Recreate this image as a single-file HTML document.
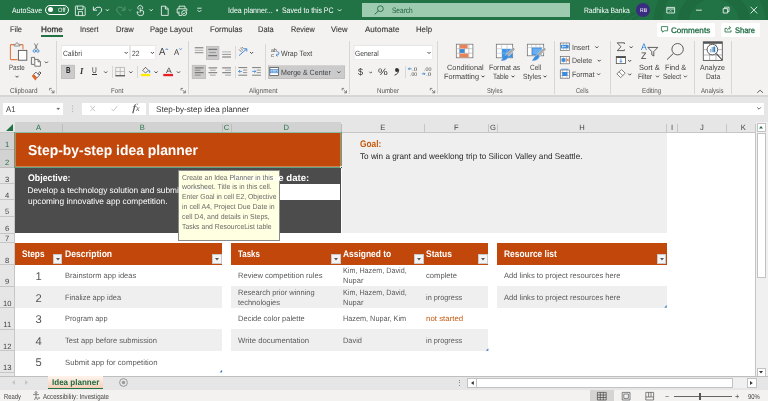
<!DOCTYPE html><html><head><meta charset="utf-8"><style>*{box-sizing:border-box;margin:0;padding:0}
html,body{width:768px;height:401px;overflow:hidden;background:#f3f2f1;font-family:"Liberation Sans",sans-serif}
#w{position:absolute;left:0;top:0;width:768px;height:401px;will-change:transform}
.a{position:absolute}
.t{position:absolute;white-space:nowrap;line-height:1;transform-origin:0 0;text-rendering:geometricPrecision}
svg{position:absolute;overflow:visible}
</style></head><body><div id="w"><div class="a" style="left:0px;top:0px;width:768px;height:20px;background:#217346;"></div><div class="a" style="left:560px;top:0;width:208px;height:20px;overflow:hidden"><svg style="left:0;top:0" width="208" height="20" viewBox="560 0 208 20"><circle cx="714" cy="24" r="56" fill="none" stroke="#1e6b40" stroke-width="9"/><circle cx="714" cy="24" r="31" fill="none" stroke="#1e6b40" stroke-width="11"/><path d="M600 20L612 12M608 20L620 12M616 20L628 12M624 20L636 12M632 20L644 12" stroke="#1e6b40" stroke-width="2"/></svg></div><div class="a" style="left:45.3px;top:4.6px;width:23.7px;height:10.2px;border:0.9px solid #fff;border-radius:5.1px"></div><div class="a" style="left:48px;top:7.4px;width:4.6px;height:4.6px;border-radius:3px;background:#fff"></div><div class="a" style="left:362.3px;top:3px;width:207.3px;height:14px;background:#9ccbb0;"></div><div class="a" style="left:636px;top:3px;width:14px;height:14px;border-radius:7px;background:#3a2d80"></div><div class="a" style="left:40.75px;top:35px;width:21.75px;height:1.8px;background:#217346;"></div><div class="a" style="left:656.75px;top:23px;width:58px;height:13.5px;background:#fff;border-radius:1.5px"></div><div class="a" style="left:721px;top:23px;width:39.25px;height:13.5px;background:#fff;border-radius:1.5px"></div><div class="a" style="left:56.25px;top:41px;width:0.8px;height:52.5px;background:#d8d6d4;"></div><div class="a" style="left:187.5px;top:41px;width:0.8px;height:52.5px;background:#d8d6d4;"></div><div class="a" style="left:349px;top:41px;width:0.8px;height:52.5px;background:#d8d6d4;"></div><div class="a" style="left:437.25px;top:41px;width:0.8px;height:52.5px;background:#d8d6d4;"></div><div class="a" style="left:553.5px;top:41px;width:0.8px;height:52.5px;background:#d8d6d4;"></div><div class="a" style="left:609.75px;top:41px;width:0.8px;height:52.5px;background:#d8d6d4;"></div><div class="a" style="left:694px;top:41px;width:0.8px;height:52.5px;background:#d8d6d4;"></div><div class="a" style="left:730.5px;top:41px;width:0.8px;height:52.5px;background:#d8d6d4;"></div><div class="a" style="left:111.75px;top:66px;width:0.8px;height:12px;background:#dad8d6;"></div><div class="a" style="left:137.25px;top:66px;width:0.8px;height:12px;background:#dad8d6;"></div><div class="a" style="left:234.5px;top:46px;width:0.8px;height:13px;background:#dad8d6;"></div><div class="a" style="left:234.5px;top:66px;width:0.8px;height:12px;background:#dad8d6;"></div><div class="a" style="left:265.25px;top:44px;width:0.8px;height:36px;background:#dad8d6;"></div><div class="a" style="left:404.75px;top:66px;width:0.8px;height:12px;background:#dad8d6;"></div><div class="a" style="left:61.25px;top:45.5px;width:68px;height:14px;background:#fff;"></div><div class="a" style="left:130.5px;top:45.5px;width:25px;height:14px;background:#fff;"></div><div class="a" style="left:61.25px;top:65px;width:13.25px;height:13.75px;background:#cbcbcb;"></div><div class="a" style="left:92.2px;top:74.4px;width:5.2px;height:0.8px;background:#333;"></div><div class="a" style="left:206.25px;top:46.25px;width:12.75px;height:13.25px;background:#cbcbcb;"></div><div class="a" style="left:192px;top:65px;width:13.75px;height:13.75px;background:#cbcbcb;"></div><div class="a" style="left:268.25px;top:65.5px;width:76.25px;height:13.25px;background:#cbcbcb;"></div><div class="a" style="left:354px;top:45.5px;width:78.75px;height:14px;background:#fff;"></div><div class="a" style="left:0px;top:95px;width:768px;height:1.6px;background:#d8d6d4;"></div><div class="a" style="left:0px;top:96.6px;width:768px;height:25.4px;background:#e6e6e6;"></div><div class="a" style="left:3px;top:102.5px;width:60px;height:12.5px;background:#fff;"></div><div class="a" style="left:81.75px;top:102.5px;width:64.5px;height:12.5px;background:#fff;"></div><div class="a" style="left:149.25px;top:102.5px;width:615px;height:12.5px;background:#fff;"></div><div class="a" style="left:0px;top:122px;width:755.5px;height:254.5px;background:#fff;"></div><div class="a" style="left:0px;top:122px;width:768px;height:10.5px;background:#e6e6e6;"></div><div class="a" style="left:14.5px;top:122px;width:326.8px;height:10.5px;background:#d2d2d2;"></div><div class="a" style="left:0px;top:132px;width:755.5px;height:0.8px;background:#c6c6c6;"></div><div class="a" style="left:14.5px;top:131.6px;width:327px;height:0.9px;background:#5fa07f;"></div><div class="a" style="left:62.1px;top:123.5px;width:0.8px;height:8.5px;background:#bdbdbd;"></div><div class="a" style="left:221.6px;top:123.5px;width:0.8px;height:8.5px;background:#bdbdbd;"></div><div class="a" style="left:230.6px;top:123.5px;width:0.8px;height:8.5px;background:#bdbdbd;"></div><div class="a" style="left:340.90000000000003px;top:123.5px;width:0.8px;height:8.5px;background:#bdbdbd;"></div><div class="a" style="left:424.1px;top:123.5px;width:0.8px;height:8.5px;background:#c6c6c6;"></div><div class="a" style="left:487.85px;top:123.5px;width:0.8px;height:8.5px;background:#c6c6c6;"></div><div class="a" style="left:497.1px;top:123.5px;width:0.8px;height:8.5px;background:#c6c6c6;"></div><div class="a" style="left:666.3000000000001px;top:123.5px;width:0.8px;height:8.5px;background:#c6c6c6;"></div><div class="a" style="left:677.1px;top:123.5px;width:0.8px;height:8.5px;background:#c6c6c6;"></div><div class="a" style="left:725.9px;top:123.5px;width:0.8px;height:8.5px;background:#c6c6c6;"></div><div class="a" style="left:754.9px;top:123.5px;width:0.8px;height:8.5px;background:#c6c6c6;"></div><div class="a" style="left:0px;top:132.8px;width:14.5px;height:243.7px;background:#e6e6e6;"></div><div class="a" style="left:0px;top:132.8px;width:14.5px;height:34.5px;background:#d2d2d2;"></div><div class="a" style="left:13.9px;top:132.8px;width:0.9px;height:34.5px;background:#5fa07f;"></div><div class="a" style="left:0px;top:148.6px;width:14.5px;height:0.8px;background:#bdbdbd;"></div><div class="a" style="left:0px;top:166.9px;width:14.5px;height:0.8px;background:#bdbdbd;"></div><div class="a" style="left:0px;top:183.1px;width:14.5px;height:0.8px;background:#c6c6c6;"></div><div class="a" style="left:0px;top:199.4px;width:14.5px;height:0.8px;background:#c6c6c6;"></div><div class="a" style="left:0px;top:215.6px;width:14.5px;height:0.8px;background:#c6c6c6;"></div><div class="a" style="left:0px;top:232.6px;width:14.5px;height:0.8px;background:#c6c6c6;"></div><div class="a" style="left:0px;top:242.29999999999998px;width:14.5px;height:0.8px;background:#c6c6c6;"></div><div class="a" style="left:0px;top:264.1px;width:14.5px;height:0.8px;background:#c6c6c6;"></div><div class="a" style="left:0px;top:285.6px;width:14.5px;height:0.8px;background:#c6c6c6;"></div><div class="a" style="left:0px;top:307.1px;width:14.5px;height:0.8px;background:#c6c6c6;"></div><div class="a" style="left:0px;top:328.6px;width:14.5px;height:0.8px;background:#c6c6c6;"></div><div class="a" style="left:0px;top:350.3px;width:14.5px;height:0.8px;background:#c6c6c6;"></div><div class="a" style="left:0px;top:371.90000000000003px;width:14.5px;height:0.8px;background:#c6c6c6;"></div><div class="a" style="left:14.1px;top:132.8px;width:0.8px;height:243.7px;background:#c6c6c6;"></div><svg style="left:6.2px;top:123.8px" width="7" height="7" viewBox="0 0 7 7"><path d="M7 0V7H0Z" fill="#217346"/></svg><div class="a" style="left:14.5px;top:132.3px;width:327px;height:35.2px;background:#c1470a;"></div><div class="a" style="left:14.2px;top:131.5px;width:327.6px;height:36.4px;border:1px solid #5fa07f;"></div><div class="a" style="left:15.1px;top:132.4px;width:325.8px;height:34.6px;border:0.7px solid rgba(255,255,255,0.3)"></div><div class="a" style="left:339.6px;top:165.6px;width:3.2px;height:3.2px;background:#1a6b3a;border:0.5px solid #e8e8e8"></div><div class="a" style="left:14.9px;top:168px;width:326.4px;height:65.2px;background:#4c4c4c;"></div><div class="a" style="left:232px;top:183.8px;width:108.2px;height:16.2px;background:#fff;"></div><div class="a" style="left:341.8px;top:132.8px;width:325px;height:100.4px;background:#efefef;"></div><div class="a" style="left:14.9px;top:243px;width:207.1px;height:21.5px;background:#c1470a;"></div><div class="a" style="left:14.9px;top:286px;width:207.1px;height:21.5px;background:#efefef;"></div><div class="a" style="left:14.9px;top:329px;width:207.1px;height:21.69999999999999px;background:#efefef;"></div><div class="a" style="left:231px;top:243px;width:257.25px;height:21.5px;background:#c1470a;"></div><div class="a" style="left:231px;top:286px;width:257.25px;height:21.5px;background:#efefef;"></div><div class="a" style="left:231px;top:329px;width:257.25px;height:21.69999999999999px;background:#efefef;"></div><div class="a" style="left:497px;top:243px;width:169.70000000000005px;height:21.5px;background:#c1470a;"></div><div class="a" style="left:497px;top:286px;width:169.70000000000005px;height:21.5px;background:#efefef;"></div><div class="a" style="left:52.9px;top:254px;width:9.6px;height:9.8px;background:#f4f4f4;border:0.8px solid #c9c9c9"></div><svg style="left:55.8px;top:257.9px" width="4" height="2.4" viewBox="0 0 4 2.4"><path d="M0 0H4L2 2.4Z" fill="#555"/></svg><div class="a" style="left:212.2px;top:254px;width:9.6px;height:9.8px;background:#f4f4f4;border:0.8px solid #c9c9c9"></div><svg style="left:215.1px;top:257.9px" width="4" height="2.4" viewBox="0 0 4 2.4"><path d="M0 0H4L2 2.4Z" fill="#555"/></svg><div class="a" style="left:331px;top:254px;width:9.6px;height:9.8px;background:#f4f4f4;border:0.8px solid #c9c9c9"></div><svg style="left:333.9px;top:257.9px" width="4" height="2.4" viewBox="0 0 4 2.4"><path d="M0 0H4L2 2.4Z" fill="#555"/></svg><div class="a" style="left:414.4px;top:254px;width:9.6px;height:9.8px;background:#f4f4f4;border:0.8px solid #c9c9c9"></div><svg style="left:417.29999999999995px;top:257.9px" width="4" height="2.4" viewBox="0 0 4 2.4"><path d="M0 0H4L2 2.4Z" fill="#555"/></svg><div class="a" style="left:478.4px;top:254px;width:9.6px;height:9.8px;background:#f4f4f4;border:0.8px solid #c9c9c9"></div><svg style="left:481.29999999999995px;top:257.9px" width="4" height="2.4" viewBox="0 0 4 2.4"><path d="M0 0H4L2 2.4Z" fill="#555"/></svg><div class="a" style="left:656.6px;top:254px;width:9.6px;height:9.8px;background:#f4f4f4;border:0.8px solid #c9c9c9"></div><svg style="left:659.5px;top:257.9px" width="4" height="2.4" viewBox="0 0 4 2.4"><path d="M0 0H4L2 2.4Z" fill="#555"/></svg><div class="a" style="left:178px;top:169.5px;width:101.6px;height:71px;background:#ffffe1;border:0.8px solid #8a8a8a"></div><div class="a" style="left:755.5px;top:122px;width:12.5px;height:254.5px;background:#f0f0f0;"></div><div class="a" style="left:755.2px;top:132.8px;width:0.8px;height:243.7px;background:#c4c4c4;"></div><div class="a" style="left:756.6px;top:122.5px;width:9.4px;height:9.6px;background:#fff;border:0.8px solid #c2c2c2"></div><svg style="left:759.3px;top:125.8px" width="4" height="2.6" viewBox="0 0 4 2.6"><path d="M0 2.6H4L2 0Z" fill="#217346"/></svg><div class="a" style="left:756.8px;top:133px;width:9px;height:145px;background:#fff;border:0.8px solid #c2c2c2"></div><div class="a" style="left:756.6px;top:367.5px;width:9.6px;height:9px;background:#fff;border:0.8px solid #c2c2c2"></div><svg style="left:759.3px;top:370.8px" width="4" height="2.6" viewBox="0 0 4 2.6"><path d="M0 0H4L2 2.6Z" fill="#333"/></svg><div class="a" style="left:0px;top:376.5px;width:768px;height:13.3px;background:#e6e6e6;"></div><div class="a" style="left:0px;top:376.2px;width:768px;height:0.9px;background:#bfbfbf;"></div><div class="a" style="left:47.5px;top:376.2px;width:55.8px;height:12.9px;background:linear-gradient(#fdf1e9 10%,#f7d9c6 70%,#f3c9b0)"></div><div class="a" style="left:47.5px;top:387.7px;width:55.8px;height:1.4px;background:#217346;"></div><svg style="left:11.5px;top:380px" width="3" height="5" viewBox="0 0 3 5"><path d="M3 0V5L0 2.5Z" fill="#c4c4c4"/></svg><svg style="left:25px;top:380px" width="3" height="5" viewBox="0 0 3 5"><path d="M0 0V5L3 2.5Z" fill="#c4c4c4"/></svg><svg style="left:119.2px;top:378.2px" width="9" height="9" viewBox="0 0 9 9"><circle cx="4.5" cy="4.5" r="3.9" fill="none" stroke="#777" stroke-width="0.7"/><circle cx="4.5" cy="4.5" r="1.7" fill="#9a9a9a"/></svg><div class="a" style="left:459.3px;top:379.5px;width:0.9px;height:0.9px;background:#888;"></div><div class="a" style="left:459.3px;top:382.3px;width:0.9px;height:0.9px;background:#888;"></div><div class="a" style="left:459.3px;top:385.1px;width:0.9px;height:0.9px;background:#888;"></div><div class="a" style="left:467.2px;top:378.4px;width:10px;height:9.2px;background:#fff;border:0.8px solid #c2c2c2"></div><svg style="left:470.6px;top:381px" width="2.8" height="4" viewBox="0 0 2.8 4"><path d="M2.8 0V4L0 2Z" fill="#333"/></svg><div class="a" style="left:477.2px;top:378.4px;width:255.8px;height:9.2px;background:#fff;border:0.8px solid #c2c2c2;border-left:none"></div><div class="a" style="left:733px;top:378.4px;width:13.5px;height:9.2px;background:#f0f0f0;"></div><div class="a" style="left:746.5px;top:378.4px;width:10px;height:9.2px;background:#fff;border:0.8px solid #c2c2c2"></div><svg style="left:750.2px;top:381px" width="2.8" height="4" viewBox="0 0 2.8 4"><path d="M0 0V4L2.8 2Z" fill="#333"/></svg><div class="a" style="left:0px;top:389.8px;width:768px;height:11.2px;background:#f3f2f1;"></div><div class="a" style="left:590.25px;top:390.2px;width:23.25px;height:10.8px;background:#d6d4d2;"></div><div class="a" style="left:673.5px;top:396.2px;width:58.8px;height:0.8px;background:#666;"></div><div class="a" style="left:699.4px;top:393.4px;width:1.9px;height:6.2px;background:#555;"></div><svg style="left:0;top:0" width="768" height="401" viewBox="0 0 768 401" fill="none" stroke-linecap="butt"><path d="M75.4 6.6Q75.4 6 76 6H83.4L85.2 7.8V15Q85.2 15.6 84.6 15.6H76Q75.4 15.6 75.4 15Z" stroke="#fff" stroke-width="0.8" fill="none" /><path d="M77.4 6.2V9.4H83V6.2 M78.4 15.4V11.6H82.4V15.4" stroke="#fff" stroke-width="0.8" fill="none" /><path d="M93.4 6.6V10.2H97 M93.6 10Q96.5 6.2 100 7.2Q102.6 8.4 101.4 11.2L97.2 15.6" stroke="#fff" stroke-width="0.85" fill="none" /><path d="M106.0 9.4L107.4 10.799999999999999L108.80000000000001 9.4" stroke="#fff" stroke-width="1.0" fill="none" /><path d="M125 6.6V10.2H121.4 M124.8 10Q121.9 6.2 118.4 7.2Q115.8 8.4 117 11.2L121.2 15.6" stroke="#5f9c7e" stroke-width="0.85" fill="none" /><path d="M128.6 9.4L130 10.799999999999999L131.4 9.4" stroke="#5f9c7e" stroke-width="1.0" fill="none" /><path d="M138.4 9.4A2.4 2.4 0 1 1 142 9.4 M140.2 7.6V12.6 M140.2 10.6H142.2Q143.6 10.6 143.6 12V13Q143.6 15.6 141 15.6H140.2Q138 15.6 137.4 13.4L137 11.8L138.6 12.4" stroke="#fff" stroke-width="0.8" fill="none" /><path d="M149.79999999999998 9.4L151.2 10.799999999999999L152.6 9.4" stroke="#fff" stroke-width="1.0" fill="none" /><path d="M161.4 6.2H165.6L168.2 8.8V15.4H161.4Z M165.4 6.2V9H168.2" stroke="#fff" stroke-width="0.8" fill="none" /><path d="M179 8.6V6.2H185V8.6 M179 13H177.2V8.8H186.8V11 M179 11.4V15.4H182" stroke="#fff" stroke-width="0.8" fill="none" /><circle cx="184.2" cy="13" r="2.5" fill="none" stroke="#fff" stroke-width="0.8"/><path d="M183 13.1L184 14L185.5 12.2" stroke="#fff" stroke-width="0.7" fill="none" /><path d="M197.2 8.2H201.6" stroke="#fff" stroke-width="0.8" fill="none" /><path d="M197.4 10L199.4 12L201.4 10" stroke="#fff" stroke-width="0.8" fill="none" /><path d="M337.90000000000003 9.35L339.6 11.049999999999999L341.3 9.35" stroke="#fff" stroke-width="0.9" fill="none" /><circle cx="380.4" cy="8.7" r="2.9" fill="none" stroke="#1d5c3a" stroke-width="0.8"/><path d="M378.4 10.9L374.7 14.4" stroke="#1d5c3a" stroke-width="0.9" fill="none" /><path d="M666.8 7.4H674.6V13H666.8Z M666.8 9H674.6" stroke="#fff" stroke-width="0.8" fill="none" /><path d="M669.6 11.6L670.7 10.4L671.8 11.6" stroke="#fff" stroke-width="0.7" fill="none" /><path d="M696 10.2H701.8" stroke="#fff" stroke-width="0.8" fill="none" /><path d="M723.2 8.6H727.6V13H723.2Z M724.6 8.4V7.2H729V11.6H727.8" stroke="#fff" stroke-width="0.8" fill="none" /><path d="M750.6 6.8L757.2 13.4M757.2 6.8L750.6 13.4" stroke="#fff" stroke-width="0.85" fill="none" /><path d="M661.4 26.6H667.6V30.8H664.2L662.6 32.2V30.8H661.4Z" stroke="#1e6b41" stroke-width="0.8" fill="none" /><path d="M727 28.4H725V32H731V30 M727.4 30.4Q727.8 27.8 730 27.8 M729 26.2L730.8 27.8L729 29.4" stroke="#1e6b41" stroke-width="0.8" fill="none" /><path d="M14.4 44.6H11.2Q10.4 44.6 10.4 45.4V58.8Q10.4 59.6 11.2 59.6H17.6 M19.6 44.6H22.2Q23 44.6 23 45.4V49.6" stroke="#e07a45" stroke-width="1.1" fill="none" /><path d="M14.2 46V44.4H15.6Q15.8 42.8 17 42.8Q18.2 42.8 18.4 44.4H19.8V46Z" stroke="#777" stroke-width="0.8" fill="#f3f2f1" /><rect x="18.4" y="50.4" width="8.4" height="9.8" fill="#fff" stroke="#555" stroke-width="0.9" rx="0"/><path d="M15.5 75.85L17 77.35L18.5 75.85" stroke="#444" stroke-width="1.0" fill="none" /><path d="M34.4 43.4L37.4 49.4 M37.8 43.4L34.8 49.4" stroke="#666" stroke-width="0.8" fill="none" /><circle cx="34.4" cy="51" r="1.3" fill="none" stroke="#2f7fd0" stroke-width="0.8"/><circle cx="37.8" cy="51" r="1.3" fill="none" stroke="#2f7fd0" stroke-width="0.8"/><path d="M34.6 59.6V57.4H31.4V64.4H34.2" stroke="#555" stroke-width="0.8" fill="none" /><path d="M34.8 59.4H38.2L40.4 61.6V66.2H34.8Z M38 59.6V61.8H40.2" stroke="#555" stroke-width="0.8" fill="#fff" /><path d="M44.9 61.55L46.4 63.05L47.9 61.55" stroke="#444" stroke-width="1.0" fill="none" /><path d="M37.4 74.2L39.8 71.8L41 73L38.6 75.4" stroke="#444" stroke-width="0.9" fill="none" /><path d="M33.6 74.4L36 72.2L39.2 75.4L37 77.8Z" stroke="#444" stroke-width="0.8" fill="#fff" /><path d="M32 76L33.6 74.6L36.8 77.8L35.4 80.2Z" stroke="#e0662a" stroke-width="0.6" fill="#e0662a" /><path d="M49.6 90.4V88.4H51.6 M51.2 90.0L53.800000000000004 92.60000000000001 M54.0 90.4V92.80000000000001H51.6" stroke="#555" stroke-width="0.7" fill="none" /><rect x="61.25" y="45.6" width="68" height="13.8" fill="none" stroke="#e1dfdd" stroke-width="0.6" rx="0"/><rect x="130.6" y="45.6" width="24.9" height="13.8" fill="none" stroke="#e1dfdd" stroke-width="0.6" rx="0"/><path d="M124.7 52.05L126.2 53.55L127.7 52.05" stroke="#444" stroke-width="1.0" fill="none" /><path d="M150.9 52.05L152.4 53.55L153.9 52.05" stroke="#444" stroke-width="1.0" fill="none" /><rect x="61.4" y="65.1" width="13.2" height="13.5" fill="none" stroke="#b8b6b4" stroke-width="0.5" rx="0"/><path d="M104.2 71.45L105.7 72.95L107.2 71.45" stroke="#444" stroke-width="1.0" fill="none" /><rect x="115.8" y="67.3" width="8.8" height="8.4" fill="none" stroke="#aaa" stroke-width="0.7" rx="0"/><path d="M120.2 67.3V75.7 M115.8 71.5H124.6" stroke="#aaa" stroke-width="0.7" fill="none" /><path d="M115.4 75.8H125" stroke="#444" stroke-width="1.1" fill="none" /><path d="M129.3 71.45L130.8 72.95L132.3 71.45" stroke="#444" stroke-width="1.0" fill="none" /><path d="M145.6 67.4L148.6 70.4L145.4 73L142.6 70.2Z" stroke="#555" stroke-width="0.8" fill="none" /><path d="M144.6 68.4L145.6 67.4" stroke="#555" stroke-width="0.8" fill="none" /><path d="M149.2 70.2Q150.4 72 149.6 72.8Q148.6 72.6 149.2 70.2Z" stroke="#2f7fd0" stroke-width="0.6" fill="#2f7fd0" /><rect x="140.9" y="73.9" width="9.3" height="2.3" fill="#ffeb00" stroke="none" stroke-width="0.8" rx="0"/><path d="M154.6 71.45L156.1 72.95L157.6 71.45" stroke="#444" stroke-width="1.0" fill="none" /><rect x="163.3" y="73.9" width="9.7" height="2.3" fill="#ea1c24" stroke="none" stroke-width="0.8" rx="0"/><path d="M177.0 71.45L178.5 72.95L180.0 71.45" stroke="#444" stroke-width="1.0" fill="none" /><path d="M181 90.4V88.4H183 M182.6 90.0L185.2 92.60000000000001 M185.4 90.4V92.80000000000001H183" stroke="#555" stroke-width="0.7" fill="none" /><path d="M165.6 50L166.8 48.6L168 50" stroke="#2f7fd0" stroke-width="0.8" fill="none" /><path d="M179.4 48.4L180.6 49.8L181.8 48.4" stroke="#2f7fd0" stroke-width="0.8" fill="none" /><path d="M194.8 47.8H203.4" stroke="#444" stroke-width="0.75" fill="none" /><path d="M194.8 50.3H203.4" stroke="#999" stroke-width="0.75" fill="none" /><path d="M194.8 52.7H203.4" stroke="#666" stroke-width="0.75" fill="none" /><rect x="206.3" y="46.3" width="12.7" height="13.3" fill="none" stroke="#b8b6b4" stroke-width="0.5" rx="0"/><path d="M208.3 49.3H217.2" stroke="#444" stroke-width="0.75" fill="none" /><path d="M209.4 52.5H216" stroke="#888" stroke-width="0.75" fill="none" /><path d="M208.3 55.7H217.2" stroke="#444" stroke-width="0.75" fill="none" /><path d="M222.2 51.9H231" stroke="#999" stroke-width="0.75" fill="none" /><path d="M222.2 54.4H231" stroke="#777" stroke-width="0.75" fill="none" /><path d="M222.2 57H231" stroke="#444" stroke-width="0.75" fill="none" /><path d="M239 55.6L246.6 49" stroke="#2f7fd0" stroke-width="0.9" fill="none" /><path d="M244 48.8H246.8V51.6" stroke="#2f7fd0" stroke-width="0.9" fill="none" /><path d="M239 49.4L241.6 52 M240.4 48L243 50.6 M241.6 47.6Q243.2 47.2 243.6 48.8" stroke="#555" stroke-width="0.7" fill="none" /><path d="M250.1 52.05L251.6 53.55L253.1 52.05" stroke="#444" stroke-width="1.0" fill="none" /><path d="M276.4 55.2Q279.2 55.2 279 53Q278.8 51.6 277.2 51.6 M277.4 54L276 55.2L277.4 56.4" stroke="#2f7fd0" stroke-width="0.8" fill="none" /><rect x="192.1" y="65.2" width="13.6" height="13.5" fill="none" stroke="#b8b6b4" stroke-width="0.5" rx="0"/><path d="M194.8 67.9H203.6" stroke="#444" stroke-width="0.75" fill="none" /><path d="M208.5 67.9H217.2" stroke="#444" stroke-width="0.75" fill="none" /><path d="M222.2 67.9H231" stroke="#444" stroke-width="0.75" fill="none" /><path d="M194.8 70.2H200.6" stroke="#777" stroke-width="0.75" fill="none" /><path d="M210 70.2H215.7" stroke="#888" stroke-width="0.75" fill="none" /><path d="M225.2 70.2H231" stroke="#888" stroke-width="0.75" fill="none" /><path d="M194.8 72.7H203.6" stroke="#444" stroke-width="0.75" fill="none" /><path d="M208.5 72.7H217.2" stroke="#444" stroke-width="0.75" fill="none" /><path d="M222.2 72.7H231" stroke="#444" stroke-width="0.75" fill="none" /><path d="M194.8 75.1H200.6" stroke="#777" stroke-width="0.75" fill="none" /><path d="M210 75.1H215.7" stroke="#888" stroke-width="0.75" fill="none" /><path d="M225.2 75.1H231" stroke="#888" stroke-width="0.75" fill="none" /><path d="M238.4 67.6H247.20000000000002" stroke="#555" stroke-width="0.75" fill="none" /><path d="M238.4 75.2H247.20000000000002" stroke="#555" stroke-width="0.75" fill="none" /><path d="M243.0 70.1H247.20000000000002" stroke="#777" stroke-width="0.75" fill="none" /><path d="M243.0 72.6H247.20000000000002" stroke="#777" stroke-width="0.75" fill="none" /><path d="M252.1 67.6H260.9" stroke="#555" stroke-width="0.75" fill="none" /><path d="M252.1 75.2H260.9" stroke="#555" stroke-width="0.75" fill="none" /><path d="M256.7 70.1H260.9" stroke="#777" stroke-width="0.75" fill="none" /><path d="M256.7 72.6H260.9" stroke="#777" stroke-width="0.75" fill="none" /><path d="M242 71.4H238.6 M240 70L238.6 71.4L240 72.8" stroke="#2f7fd0" stroke-width="0.8" fill="none" /><path d="M252.2 71.4H255.8 M254.4 70L255.8 71.4L254.4 72.8" stroke="#2f7fd0" stroke-width="0.8" fill="none" /><rect x="268.3" y="65.3" width="76.2" height="13.4" fill="none" stroke="#b8b6b4" stroke-width="0.5" rx="0"/><rect x="269.8" y="67.4" width="8.8" height="8" fill="#fff" stroke="#555" stroke-width="0.8" rx="0"/><rect x="270.4" y="69.6" width="7.6" height="3.2" fill="#cfe3f7" stroke="#2f7fd0" stroke-width="0.6" rx="0"/><path d="M271.6 71.2H276.8 M272.6 70.4L271.6 71.2L272.6 72 M275.8 70.4L276.8 71.2L275.8 72" stroke="#2f7fd0" stroke-width="0.6" fill="none" /><path d="M337.3 71.45L338.8 72.95L340.3 71.45" stroke="#444" stroke-width="1.0" fill="none" /><path d="M342.1 90.4V88.4H344.1 M343.70000000000005 90.0L346.3 92.60000000000001 M346.5 90.4V92.80000000000001H344.1" stroke="#555" stroke-width="0.7" fill="none" /><rect x="354.1" y="45.6" width="78.4" height="13.8" fill="none" stroke="#e1dfdd" stroke-width="0.6" rx="0"/><path d="M427.5 52.05L429 53.55L430.5 52.05" stroke="#444" stroke-width="1.0" fill="none" /><path d="M369.4 71.75L370.7 73.05000000000001L372.0 71.75" stroke="#555" stroke-width="1.0" fill="none" /><circle cx="396.9" cy="70" r="1.9" fill="#333"/><path d="M398.7 69.6Q399 73.4 394.6 75.2" stroke="#333" stroke-width="1.0" fill="none" /><path d="M411.6 68.8H408.4 M409.6 67.6L408.4 68.8L409.6 70" stroke="#2f7fd0" stroke-width="0.8" fill="none" /><path d="M421.8 73.8H425 M423.8 72.6L425 73.8L423.8 75" stroke="#2f7fd0" stroke-width="0.8" fill="none" /><path d="M430.3 90.4V88.4H432.3 M431.90000000000003 90.0L434.5 92.60000000000001 M434.7 90.4V92.80000000000001H432.3" stroke="#555" stroke-width="0.7" fill="none" /><rect x="456.3" y="44.2" width="16.6" height="13.6" fill="#fff" stroke="#666" stroke-width="0.7" rx="0"/><path d="M456.3 48.7H472.9 M456.3 53.2H472.9 M459.4 44.2V57.8 M464.6 44.2V57.8 M468.8 44.2V57.8" stroke="#999" stroke-width="0.5" fill="none" /><rect x="459.6" y="44.6" width="8" height="3.8" fill="#e8825a" stroke="none" stroke-width="0.8" rx="0"/><rect x="459.6" y="49.1" width="5" height="3.8" fill="#3b87d6" stroke="none" stroke-width="0.8" rx="0"/><rect x="459.6" y="53.6" width="8.8" height="3.8" fill="#e8825a" stroke="none" stroke-width="0.8" rx="0"/><path d="M481.5 75.65L483 77.15L484.5 75.65" stroke="#444" stroke-width="1.0" fill="none" /><rect x="496.3" y="44.2" width="16.4" height="13.6" fill="#fff" stroke="#666" stroke-width="0.7" rx="0"/><rect x="501.8" y="48.8" width="10.8" height="8.8" fill="#4393e4" stroke="none" stroke-width="0.8" rx="0"/><path d="M496.3 48.7H501.8 M496.3 53.2H501.8 M501.6 44.2V48.8 M507 44.2V48.8" stroke="#aaa" stroke-width="0.5" fill="none" /><path d="M501.8 53.2H512.6 M507 48.8V57.6" stroke="#9cc8f2" stroke-width="0.5" fill="none" /><path d="M514 48.6L506 56.6" stroke="#f3f2f1" stroke-width="3.4" fill="none" /><path d="M514 48.6L507 55.6" stroke="#7a7a7a" stroke-width="2.1" fill="none" /><path d="M513.8 48.8L507.2 55.4" stroke="#f4f4f4" stroke-width="0.8" fill="none" /><path d="M506.6 54.8Q503.2 56.4 501.4 60.6Q506.6 60.8 508.4 56.6Z" stroke="#3b8de0" stroke-width="0.4" fill="#3b8de0" /><path d="M511.5 75.65L513 77.15L514.5 75.65" stroke="#444" stroke-width="1.0" fill="none" /><rect x="527.3" y="44.2" width="16.4" height="11.6" fill="#fff" stroke="#666" stroke-width="0.7" rx="0"/><path d="M527.3 47.4H543.7 M531.6 44.2V55.8 M536 44.2V47.4 M540 44.2V47.4" stroke="#aaa" stroke-width="0.5" fill="none" /><rect x="531.8" y="47.6" width="10" height="7.6" fill="#4393e4" stroke="none" stroke-width="0.8" rx="0"/><rect x="532.8" y="48.6" width="8" height="5.6" fill="#6aaef0" stroke="none" stroke-width="0.8" rx="0"/><path d="M545 48.6L537 56.6" stroke="#f3f2f1" stroke-width="3.4" fill="none" /><path d="M545 48.6L538 55.6" stroke="#7a7a7a" stroke-width="2.1" fill="none" /><path d="M544.8 48.8L538.2 55.4" stroke="#f4f4f4" stroke-width="0.8" fill="none" /><path d="M537.6 54.8Q534.2 56.4 532.4 60.6Q537.6 60.8 539.4 56.6Z" stroke="#3b8de0" stroke-width="0.4" fill="#3b8de0" /><path d="M543.5 75.65L545 77.15L546.5 75.65" stroke="#444" stroke-width="1.0" fill="none" /><rect x="560.3" y="43" width="9.2" height="7.4" fill="#fff" stroke="#666" stroke-width="0.7" rx="0"/><path d="M560.3 46.7H569.5 M563.4 43V50.4 M566.4 43V50.4" stroke="#999" stroke-width="0.5" fill="none" /><rect x="561" y="44.8" width="7.6" height="3.6" fill="#3b8de0" stroke="none" stroke-width="0.8" rx="0"/><path d="M566 46.6H562 M563.2 45.6L562 46.6L563.2 47.6" stroke="#fff" stroke-width="0.6" fill="none" /><path d="M595.3 46.45L596.8 47.95L598.3 46.45" stroke="#444" stroke-width="1.0" fill="none" /><rect x="560.3" y="56.4" width="9.2" height="7.4" fill="#fff" stroke="#666" stroke-width="0.7" rx="0"/><path d="M560.3 60.1H569.5 M563.4 56.4V63.8 M566.4 56.4V63.8" stroke="#999" stroke-width="0.5" fill="none" /><rect x="561.6" y="58.2" width="3.8" height="3.6" fill="#3b8de0" stroke="none" stroke-width="0.8" rx="0"/><path d="M566.2 58.4L569 61.6 M569 58.4L566.2 61.6" stroke="#e0662a" stroke-width="0.8" fill="none" /><path d="M597.7 59.85L599.2 61.35L600.7 59.85" stroke="#444" stroke-width="1.0" fill="none" /><rect x="560.3" y="70" width="9.2" height="8.2" fill="#fff" stroke="#666" stroke-width="0.7" rx="0"/><path d="M560.3 72.6H569.5 M560.3 75.4H569.5 M562.6 70V78.2 M567 70V78.2" stroke="#999" stroke-width="0.5" fill="none" /><rect x="562.2" y="72" width="5.2" height="4" fill="#3b8de0" stroke="none" stroke-width="0.8" rx="0"/><path d="M561.4 69.2H568.4" stroke="#3b8de0" stroke-width="0.8" fill="none" /><path d="M597.1 73.45L598.6 74.95L600.1 73.45" stroke="#444" stroke-width="1.0" fill="none" /><path d="M624.4 44V42.8H617.2L621 46.8L617.2 50.6H624.4V49.4" stroke="#444" stroke-width="0.85" fill="none" /><path d="M629.7 46.45L631.2 47.95L632.7 46.45" stroke="#444" stroke-width="1.0" fill="none" /><rect x="616.3" y="56.4" width="9.2" height="7.2" fill="#fff" stroke="#555" stroke-width="0.8" rx="0"/><path d="M616.3 57.2H625.5" stroke="#444" stroke-width="1.5" fill="none" /><path d="M620.9 58.6V62.2 M619.5 60.9L620.9 62.3L622.3 60.9" stroke="#2f7fd0" stroke-width="0.8" fill="none" /><path d="M628.2 60.05L629.7 61.55L631.2 60.05" stroke="#444" stroke-width="1.0" fill="none" /><path d="M621.6 69.6L625.2 73.2L620.6 77.6L616.8 73.8Z M619 71.8L622.8 75.6" stroke="#666" stroke-width="0.8" fill="#fff" /><path d="M628.2 73.65L629.7 75.15L631.2 73.65" stroke="#444" stroke-width="1.0" fill="none" /><path d="M647.8 47.4H657.8L653.8 51.6V56L651.8 54.8V51.6Z" stroke="#444" stroke-width="0.85" fill="none" /><circle cx="677.6" cy="49.2" r="5.7" fill="none" stroke="#444" stroke-width="0.85"/><path d="M673.4 53.4L667 59.6" stroke="#444" stroke-width="0.95" fill="none" /><path d="M656.0 75.65L657.5 77.15L659.0 75.65" stroke="#444" stroke-width="1.0" fill="none" /><path d="M683.9 75.65L685.4 77.15L686.9 75.65" stroke="#444" stroke-width="1.0" fill="none" /><rect x="703.3" y="41.8" width="19" height="18.6" fill="#fff" stroke="#555" stroke-width="0.9" rx="0"/><path d="M703.3 42.8H722.3" stroke="#555" stroke-width="2" fill="none" /><path d="M703.3 49.6H722.3 M703.3 55H722.3 M709.6 44V60.4 M716 44V60.4" stroke="#888" stroke-width="0.6" fill="none" /><circle cx="712.4" cy="49.6" r="5.3" fill="#fff" stroke="#444" stroke-width="0.9"/><rect x="709.8" y="49" width="1.6" height="3.2" fill="#9bb7d4" stroke="none" stroke-width="0.8" rx="0"/><rect x="711.6" y="47" width="1.8" height="5.2" fill="#9bb7d4" stroke="none" stroke-width="0.8" rx="0"/><rect x="713.4" y="46.6" width="1.8" height="5.6" fill="#2f7fd0" stroke="none" stroke-width="0.8" rx="0"/><path d="M716.4 53.6L722.2 60" stroke="#444" stroke-width="1.1" fill="none" /><path d="M757.2 92.8L760.1 90.2L763 92.8" stroke="#555" stroke-width="0.9" fill="none" /><path d="M56.8 108.2H59.6L58.2 109.8Z" stroke="#555" stroke-width="0.4" fill="#555" /><rect x="72.2" y="105.6" width="0.9" height="0.9" fill="#999" stroke="none" stroke-width="0.8" rx="0"/><rect x="72.2" y="108.4" width="0.9" height="0.9" fill="#999" stroke="none" stroke-width="0.8" rx="0"/><rect x="72.2" y="111.2" width="0.9" height="0.9" fill="#999" stroke="none" stroke-width="0.8" rx="0"/><path d="M90.4 105.8L95 111.2M95 105.8L90.4 111.2" stroke="#c2c2c2" stroke-width="0.9" fill="none" /><path d="M111.6 108.8L113.4 111L117.2 106" stroke="#c2c2c2" stroke-width="0.9" fill="none" /><path d="M757.2 107.4L759 109.2L760.8 107.4" stroke="#555" stroke-width="0.9" fill="none" /><path d="M597.4 392.4H606.2V400H597.4Z M597.4 395H606.2 M597.4 397.5H606.2 M600.3 392.4V400 M603.3 392.4V400" stroke="#444" stroke-width="0.7" fill="none" /><path d="M622.2 392.4H630V400H622.2Z M623.8 394H628.4V398.4H623.8Z" stroke="#555" stroke-width="0.7" fill="none" /><path d="M645.8 392.4H653.6V400H645.8Z M645.8 397H653.6 M648.6 392.4V397 M651 392.4V397" stroke="#555" stroke-width="0.7" fill="none" /><circle cx="36" cy="392.6" r="1" fill="none" stroke="#444" stroke-width="0.6"/><path d="M33 394.6H39 M36 394.6V397 M34.4 400L36 397L37.6 400 M38 397.2L39.6 398.8M39.6 397.2L38 398.8" stroke="#444" stroke-width="0.6" fill="none" /><path d="M219.8 372.3H222V370.1Z" stroke="#3b78c8" stroke-width="0.2" fill="#3b78c8" /><path d="M486.05 350.7H488.25V348.5Z" stroke="#3b78c8" stroke-width="0.2" fill="#3b78c8" /><path d="M664.5 307.5H666.7V305.3Z" stroke="#3b78c8" stroke-width="0.2" fill="#3b78c8" /></svg><span class="t" style="left:11.75px;top:7.00px;font-size:7.8px;color:#fff;transform:scaleX(0.8872);">AutoSave</span><span class="t" style="left:57.5px;top:8.00px;font-size:6.2px;color:#fff;transform:scaleX(0.9213);">Off</span><span class="t" style="left:227.75px;top:7.00px;font-size:8px;color:#fff;transform:scaleX(0.8823);">Idea planner...</span><span class="t" style="left:276.4px;top:7.00px;font-size:8px;color:#fff;transform:scaleX(0.7822);">•</span><span class="t" style="left:281.8px;top:7.00px;font-size:8px;color:#fff;transform:scaleX(0.8633);">Saved to this PC</span><span class="t" style="left:392px;top:7.00px;font-size:7.8px;color:#1d5c3a;transform:scaleX(0.8394);">Search</span><span class="t" style="left:583.5px;top:7.00px;font-size:7.8px;color:#fff;transform:scaleX(0.8650);">Radhika Banka</span><span class="t" style="left:639.6px;top:9.00px;font-size:5.6px;color:#fff;transform:scaleX(0.8996);">RB</span><span class="t" style="left:10px;top:26.00px;font-size:8.1px;color:#3a3a3a;-webkit-text-stroke:0.12px #3a3a3a;transform:scaleX(0.9198);">File</span><span class="t" style="left:79.5px;top:26.00px;font-size:8.1px;color:#3a3a3a;-webkit-text-stroke:0.12px #3a3a3a;transform:scaleX(0.9136);">Insert</span><span class="t" style="left:115.5px;top:26.00px;font-size:8.1px;color:#3a3a3a;-webkit-text-stroke:0.12px #3a3a3a;transform:scaleX(0.9396);">Draw</span><span class="t" style="left:150px;top:26.00px;font-size:8.1px;color:#3a3a3a;-webkit-text-stroke:0.12px #3a3a3a;transform:scaleX(0.9350);">Page Layout</span><span class="t" style="left:209.5px;top:26.00px;font-size:8.1px;color:#3a3a3a;-webkit-text-stroke:0.12px #3a3a3a;transform:scaleX(0.9634);">Formulas</span><span class="t" style="left:258.25px;top:26.00px;font-size:8.1px;color:#3a3a3a;-webkit-text-stroke:0.12px #3a3a3a;transform:scaleX(0.9205);">Data</span><span class="t" style="left:290.75px;top:26.00px;font-size:8.1px;color:#3a3a3a;-webkit-text-stroke:0.12px #3a3a3a;transform:scaleX(0.8946);">Review</span><span class="t" style="left:331.25px;top:26.00px;font-size:8.1px;color:#3a3a3a;-webkit-text-stroke:0.12px #3a3a3a;transform:scaleX(0.9479);">View</span><span class="t" style="left:364.5px;top:26.00px;font-size:8.1px;color:#3a3a3a;-webkit-text-stroke:0.12px #3a3a3a;transform:scaleX(0.9955);">Automate</span><span class="t" style="left:416px;top:26.00px;font-size:8.1px;color:#3a3a3a;-webkit-text-stroke:0.12px #3a3a3a;transform:scaleX(0.9606);">Help</span><span class="t" style="left:40.75px;top:26.00px;font-size:8.1px;color:#2e2e2e;-webkit-text-stroke:0.25px #2e2e2e;transform:scaleX(1.0072);">Home</span><span class="t" style="left:670.8px;top:27.00px;font-size:8.0px;color:#1e6b41;-webkit-text-stroke:0.28px #1e6b41;transform:scaleX(1.0132);">Comments</span><span class="t" style="left:735px;top:27.00px;font-size:8.0px;color:#1e6b41;-webkit-text-stroke:0.28px #1e6b41;transform:scaleX(0.9364);">Share</span><span class="t" style="left:9.5px;top:88.00px;font-size:7.1px;color:#555;transform:scaleX(0.9053);">Clipboard</span><span class="t" style="left:110.75px;top:88.00px;font-size:7.1px;color:#555;transform:scaleX(0.8801);">Font</span><span class="t" style="left:249px;top:88.00px;font-size:7.1px;color:#555;transform:scaleX(0.9034);">Alignment</span><span class="t" style="left:377px;top:88.00px;font-size:7.1px;color:#555;transform:scaleX(0.8718);">Number</span><span class="t" style="left:487.25px;top:88.00px;font-size:7.1px;color:#555;transform:scaleX(0.8019);">Styles</span><span class="t" style="left:575.5px;top:88.00px;font-size:7.1px;color:#555;transform:scaleX(0.7921);">Cells</span><span class="t" style="left:641.75px;top:88.00px;font-size:7.1px;color:#555;transform:scaleX(0.8870);">Editing</span><span class="t" style="left:701px;top:88.00px;font-size:7.1px;color:#555;transform:scaleX(0.8516);">Analysis</span><span class="t" style="left:9px;top:64.00px;font-size:7.6px;color:#444;transform:scaleX(0.8084);">Paste</span><span class="t" style="left:63px;top:50.00px;font-size:7.6px;color:#444;transform:scaleX(0.8824);">Calibri</span><span class="t" style="left:132px;top:50.00px;font-size:7.6px;color:#444;transform:scaleX(0.8872);">22</span><span class="t" style="left:65.8px;top:66.00px;font-size:8.6px;color:#222;font-weight:bold;transform:scaleX(0.7397);">B</span><span class="t" style="left:79.9px;top:67.00px;font-size:9px;color:#333;font-weight:bold;font-style:italic;font-family:'Liberation Serif',serif;transform:scaleX(0.9387);">I</span><span class="t" style="left:92.4px;top:67.00px;font-size:8.2px;color:#333;transform:scaleX(0.8106);">U</span><span class="t" style="left:280.75px;top:50.00px;font-size:7.6px;color:#444;transform:scaleX(0.9217);">Wrap Text</span><span class="t" style="left:281px;top:69.00px;font-size:7.6px;color:#444;transform:scaleX(0.9289);">Merge &amp; Center</span><span class="t" style="left:355.25px;top:50.00px;font-size:7.6px;color:#444;transform:scaleX(0.8786);">General</span><span class="t" style="left:357.75px;top:68.00px;font-size:9.5px;color:#333;transform:scaleX(0.9440);">$</span><span class="t" style="left:378px;top:68.00px;font-size:9.5px;color:#333;transform:scaleX(1.1534);">%</span><span class="t" style="left:446.5px;top:64.00px;font-size:7.6px;color:#444;transform:scaleX(0.9671);">Conditional</span><span class="t" style="left:444px;top:73.00px;font-size:7.6px;color:#444;transform:scaleX(0.9643);">Formatting</span><span class="t" style="left:488.5px;top:64.00px;font-size:7.6px;color:#444;transform:scaleX(0.9141);">Format as</span><span class="t" style="left:493.25px;top:73.00px;font-size:7.6px;color:#444;transform:scaleX(0.8675);">Table</span><span class="t" style="left:529.75px;top:64.00px;font-size:7.6px;color:#444;transform:scaleX(0.8592);">Cell</span><span class="t" style="left:522.75px;top:73.00px;font-size:7.6px;color:#444;transform:scaleX(0.8822);">Styles</span><span class="t" style="left:571.5px;top:44.00px;font-size:7.6px;color:#444;transform:scaleX(0.9211);">Insert</span><span class="t" style="left:571.5px;top:57.00px;font-size:7.6px;color:#444;transform:scaleX(0.9110);">Delete</span><span class="t" style="left:571.5px;top:71.00px;font-size:7.6px;color:#444;transform:scaleX(0.9351);">Format</span><span class="t" style="left:638.5px;top:64.00px;font-size:7.6px;color:#444;transform:scaleX(0.9830);">Sort &amp;</span><span class="t" style="left:638px;top:73.00px;font-size:7.6px;color:#444;transform:scaleX(0.8444);">Filter</span><span class="t" style="left:664.75px;top:64.00px;font-size:7.6px;color:#444;transform:scaleX(0.9680);">Find &amp;</span><span class="t" style="left:663px;top:73.00px;font-size:7.6px;color:#444;transform:scaleX(0.8527);">Select</span><span class="t" style="left:700.25px;top:64.00px;font-size:7.6px;color:#444;transform:scaleX(0.9249);">Analyze</span><span class="t" style="left:705.5px;top:73.00px;font-size:7.6px;color:#444;transform:scaleX(0.8880);">Data</span><span class="t" style="left:5.5px;top:106.00px;font-size:8.2px;color:#444;transform:scaleX(0.9485);">A1</span><span class="t" style="left:156px;top:106.00px;font-size:8.2px;color:#333;transform:scaleX(0.9918);">Step-by-step idea planner</span><span class="t" style="left:132.3px;top:104.00px;font-size:10.4px;color:#555;font-style:italic;font-family:'Liberation Serif',serif;transform:scaleX(1.4876);">f</span><span class="t" style="left:135.9px;top:105.00px;font-size:8.2px;color:#555;font-style:italic;font-family:'Liberation Serif',serif;transform:scaleX(0.9614);">x</span><span class="t" style="left:35.96px;top:124.00px;font-size:7.6px;color:#217346;">A</span><span class="t" style="left:139.71px;top:124.00px;font-size:7.6px;color:#217346;">B</span><span class="t" style="left:223.76px;top:124.00px;font-size:7.6px;color:#217346;">C</span><span class="t" style="left:283.41px;top:124.00px;font-size:7.6px;color:#217346;">D</span><span class="t" style="left:380.36px;top:124.00px;font-size:7.6px;color:#444;">E</span><span class="t" style="left:454.05px;top:124.00px;font-size:7.6px;color:#444;">F</span><span class="t" style="left:489.91px;top:124.00px;font-size:7.6px;color:#444;">G</span><span class="t" style="left:579.36px;top:124.00px;font-size:7.6px;color:#444;">H</span><span class="t" style="left:671.04px;top:124.00px;font-size:7.6px;color:#444;">I</span><span class="t" style="left:700.0px;top:124.00px;font-size:7.6px;color:#444;">J</span><span class="t" style="left:740.76px;top:124.00px;font-size:7.6px;color:#444;">K</span><span class="t" style="left:5.08px;top:141.00px;font-size:7.6px;color:#217346;">1</span><span class="t" style="left:5.08px;top:159.00px;font-size:7.6px;color:#217346;">2</span><span class="t" style="left:5.08px;top:176.00px;font-size:7.6px;color:#444;">3</span><span class="t" style="left:5.08px;top:192.00px;font-size:7.6px;color:#444;">4</span><span class="t" style="left:5.08px;top:208.00px;font-size:7.6px;color:#444;">5</span><span class="t" style="left:5.08px;top:225.00px;font-size:7.6px;color:#444;">6</span><span class="t" style="left:5.08px;top:235.00px;font-size:7.6px;color:#444;">7</span><span class="t" style="left:5.08px;top:257.00px;font-size:7.6px;color:#444;">8</span><span class="t" style="left:5.08px;top:278.00px;font-size:7.6px;color:#444;">9</span><span class="t" style="left:2.97px;top:300.00px;font-size:7.6px;color:#444;">10</span><span class="t" style="left:3.25px;top:321.00px;font-size:7.6px;color:#444;">11</span><span class="t" style="left:2.97px;top:343.00px;font-size:7.6px;color:#444;">12</span><span class="t" style="left:2.97px;top:364.00px;font-size:7.6px;color:#444;">13</span><span class="t" style="left:28px;top:144.00px;font-size:14.2px;color:#fff;font-weight:bold;transform:scaleX(0.9802);">Step-by-step idea planner</span><span class="t" style="left:27.5px;top:174.00px;font-size:9.6px;color:#fff;font-weight:bold;transform:scaleX(0.9161);">Objective:</span><span class="t" style="left:27.5px;top:186.00px;font-size:8.3px;color:#fff;">Develop a technology solution and submit it to the</span><span class="t" style="left:27.5px;top:197.00px;font-size:8.3px;color:#fff;transform:scaleX(1.0048);">upcoming innovative app competition.</span><span class="t" style="left:231.41px;top:174.00px;font-size:9.6px;color:#fff;font-weight:bold;">Project due date:</span><span class="t" style="left:359.5px;top:140.00px;font-size:9.6px;color:#c55a11;font-weight:bold;transform:scaleX(0.8662);">Goal:</span><span class="t" style="left:359.5px;top:152.00px;font-size:8.3px;color:#2b2b2b;transform:scaleX(0.9852);">To win a grant and weeklong trip to Silicon Valley and Seattle.</span><span class="t" style="left:22px;top:250.00px;font-size:9.6px;color:#fff;font-weight:bold;transform:scaleX(0.8607);">Steps</span><span class="t" style="left:64.5px;top:250.00px;font-size:9.6px;color:#fff;font-weight:bold;transform:scaleX(0.8924);">Description</span><span class="t" style="left:238.4px;top:250.00px;font-size:9.6px;color:#fff;font-weight:bold;transform:scaleX(0.8264);">Tasks</span><span class="t" style="left:342.6px;top:250.00px;font-size:9.6px;color:#fff;font-weight:bold;transform:scaleX(0.8760);">Assigned to</span><span class="t" style="left:425.8px;top:250.00px;font-size:9.6px;color:#fff;font-weight:bold;transform:scaleX(0.8831);">Status</span><span class="t" style="left:504.3px;top:250.00px;font-size:9.6px;color:#fff;font-weight:bold;transform:scaleX(0.8745);">Resource list</span><span class="t" style="left:35.48px;top:272.00px;font-size:11.2px;color:#555;">1</span><span class="t" style="left:35.48px;top:294.00px;font-size:11.2px;color:#555;">2</span><span class="t" style="left:35.48px;top:315.00px;font-size:11.2px;color:#555;">3</span><span class="t" style="left:35.48px;top:337.00px;font-size:11.2px;color:#555;">4</span><span class="t" style="left:35.48px;top:358.00px;font-size:11.2px;color:#555;">5</span><span class="t" style="left:64.5px;top:272.00px;font-size:7.7px;color:#595959;transform:scaleX(0.9806);">Brainstorm app ideas</span><span class="t" style="left:64.5px;top:294.00px;font-size:7.7px;color:#595959;transform:scaleX(0.9634);">Finalize app idea</span><span class="t" style="left:64.5px;top:315.00px;font-size:7.7px;color:#595959;transform:scaleX(0.9561);">Program app</span><span class="t" style="left:64.5px;top:337.00px;font-size:7.7px;color:#595959;transform:scaleX(0.9830);">Test app before submission</span><span class="t" style="left:64.5px;top:359.00px;font-size:7.7px;color:#595959;transform:scaleX(1.0114);">Submit app for competition</span><span class="t" style="left:238.3px;top:272.00px;font-size:7.7px;color:#595959;transform:scaleX(0.9883);">Review competition rules</span><span class="t" style="left:238.3px;top:289.00px;font-size:7.7px;color:#595959;transform:scaleX(0.9755);">Research prior winning</span><span class="t" style="left:238.3px;top:299.00px;font-size:7.7px;color:#595959;transform:scaleX(0.9717);">technologies</span><span class="t" style="left:238.3px;top:315.00px;font-size:7.7px;color:#595959;transform:scaleX(0.9816);">Decide color palette</span><span class="t" style="left:238.3px;top:337.00px;font-size:7.7px;color:#595959;transform:scaleX(1.0117);">Write documentation</span><span class="t" style="left:342.6px;top:267.00px;font-size:7.7px;color:#595959;transform:scaleX(0.9369);">Kim, Hazem, David,</span><span class="t" style="left:342.6px;top:277.00px;font-size:7.7px;color:#595959;transform:scaleX(0.9736);">Nupar</span><span class="t" style="left:342.6px;top:289.00px;font-size:7.7px;color:#595959;transform:scaleX(0.9369);">Kim, Hazem, David,</span><span class="t" style="left:342.6px;top:299.00px;font-size:7.7px;color:#595959;transform:scaleX(0.9736);">Nupar</span><span class="t" style="left:342.6px;top:315.00px;font-size:7.7px;color:#595959;transform:scaleX(0.9474);">Hazem, Nupar, Kim</span><span class="t" style="left:342.6px;top:337.00px;font-size:7.7px;color:#595959;transform:scaleX(0.9615);">David</span><span class="t" style="left:425.8px;top:272.00px;font-size:7.7px;color:#595959;transform:scaleX(0.9919);">complete</span><span class="t" style="left:425.8px;top:294.00px;font-size:7.7px;color:#595959;transform:scaleX(0.9518);">in progress</span><span class="t" style="left:425.8px;top:315.00px;font-size:7.7px;color:#c55a11;transform:scaleX(1.0240);">not started</span><span class="t" style="left:425.8px;top:337.00px;font-size:7.7px;color:#595959;transform:scaleX(0.9518);">in progress</span><span class="t" style="left:504.3px;top:272.00px;font-size:7.7px;color:#595959;transform:scaleX(0.9837);">Add links to project resources here</span><span class="t" style="left:504.3px;top:294.00px;font-size:7.7px;color:#595959;transform:scaleX(0.9837);">Add links to project resources here</span><span class="t" style="left:181.8px;top:174.00px;font-size:7.3px;color:#6a6a6a;transform:scaleX(0.9446);">Create an Idea Planner in this</span><span class="t" style="left:181.8px;top:183.00px;font-size:7.3px;color:#6a6a6a;transform:scaleX(0.9533);">worksheet. Title is in this cell.</span><span class="t" style="left:181.8px;top:193.00px;font-size:7.3px;color:#6a6a6a;transform:scaleX(0.9356);">Enter Goal in cell E2, Objective</span><span class="t" style="left:181.8px;top:203.00px;font-size:7.3px;color:#6a6a6a;transform:scaleX(0.9603);">in cell A4, Project Due Date in</span><span class="t" style="left:181.8px;top:213.00px;font-size:7.3px;color:#6a6a6a;transform:scaleX(0.9525);">cell D4, and details in Steps,</span><span class="t" style="left:181.8px;top:223.00px;font-size:7.3px;color:#6a6a6a;transform:scaleX(0.9410);">Tasks and ResourceList table</span><span class="t" style="left:52px;top:378.00px;font-size:8.4px;color:#1e6b41;font-weight:bold;transform:scaleX(0.9586);">Idea planner</span><span class="t" style="left:3.75px;top:393.00px;font-size:7.3px;color:#444;transform:scaleX(0.8059);">Ready</span><span class="t" style="left:43.25px;top:393.00px;font-size:7.3px;color:#444;transform:scaleX(0.8345);">Accessibility: Investigate</span><span class="t" style="left:748px;top:394.00px;font-size:7px;color:#444;transform:scaleX(0.8384);">90%</span><span class="t" style="left:665.2px;top:393.00px;font-size:8px;color:#555;transform:scaleX(0.8990);">−</span><span class="t" style="left:735.2px;top:393.00px;font-size:8px;color:#555;transform:scaleX(0.9418);">+</span><span class="t" style="left:159.1px;top:48.00px;font-size:10.2px;color:#444;transform:scaleX(0.9416);">A</span><span class="t" style="left:173.8px;top:49.00px;font-size:8.2px;color:#444;transform:scaleX(0.9509);">A</span><span class="t" style="left:165.5px;top:67.00px;font-size:7.8px;color:#444;transform:scaleX(1.0955);">A</span><span class="t" style="left:271px;top:49.00px;font-size:5.6px;color:#444;transform:scaleX(0.9303);">ab</span><span class="t" style="left:271px;top:54.00px;font-size:5.6px;color:#444;transform:scaleX(1.0011);">c</span><span class="t" style="left:412.4px;top:68.00px;font-size:5.2px;color:#444;transform:scaleX(1.2014);">.0</span><span class="t" style="left:410.4px;top:73.00px;font-size:5.2px;color:#444;transform:scaleX(0.9974);">.00</span><span class="t" style="left:423.6px;top:68.00px;font-size:5.2px;color:#444;transform:scaleX(1.0251);">.00</span><span class="t" style="left:426px;top:73.00px;font-size:5.2px;color:#444;transform:scaleX(1.2014);">.0</span><span class="t" style="left:641px;top:43.00px;font-size:9.6px;color:#2f7fd0;transform:scaleX(0.9054);">A</span><span class="t" style="left:641.2px;top:51.00px;font-size:9.4px;color:#444;transform:scaleX(0.9417);">Z</span></div></body></html>
